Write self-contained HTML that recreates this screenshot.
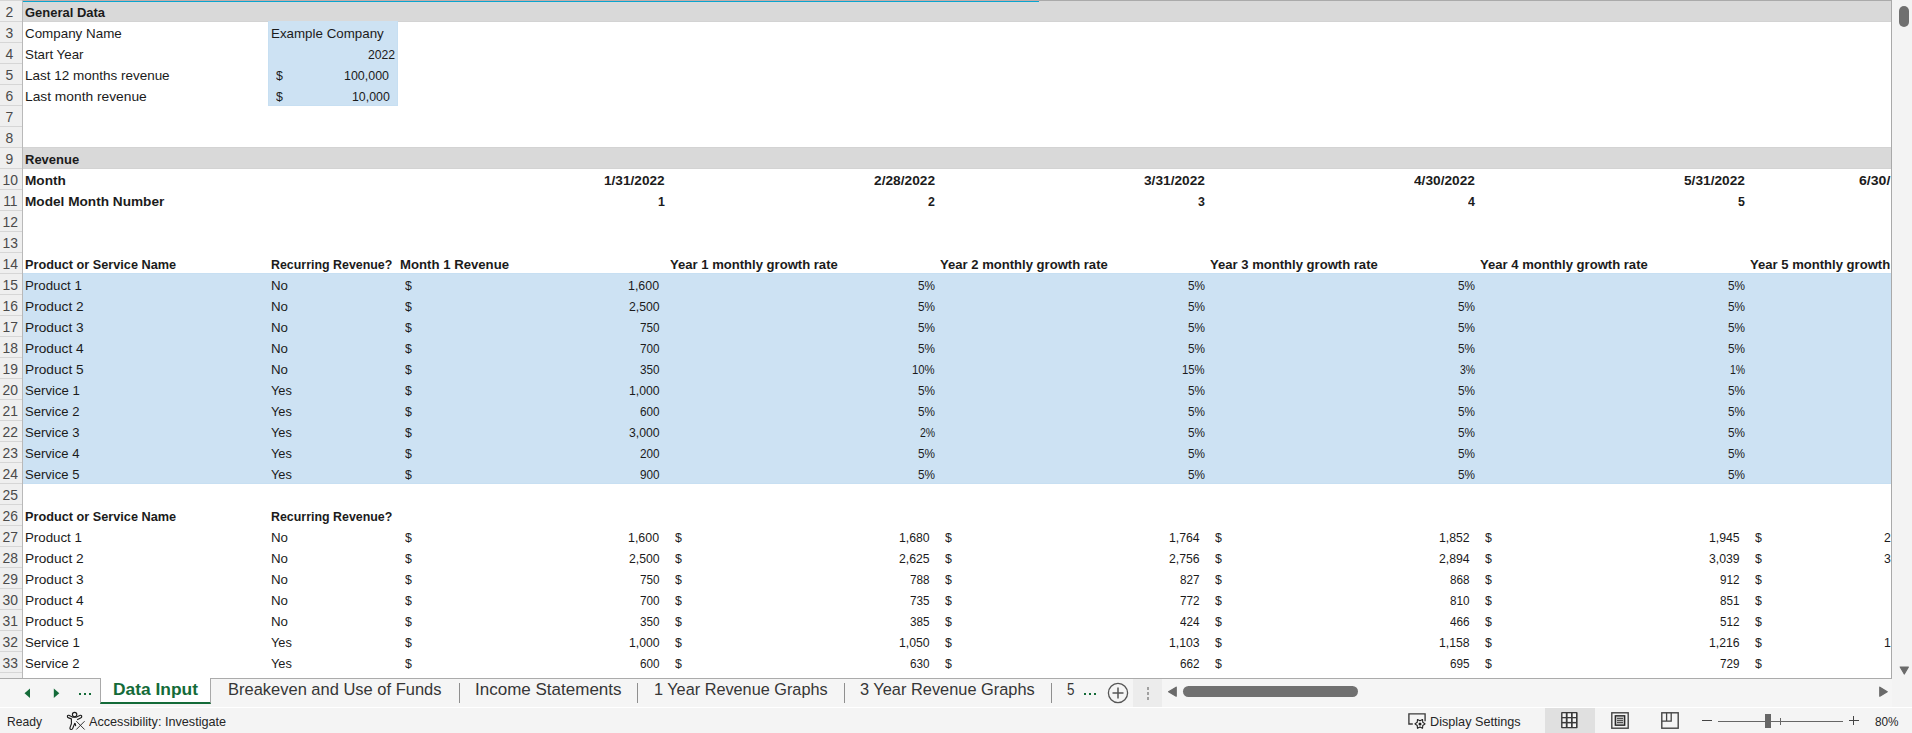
<!DOCTYPE html>
<html><head><meta charset="utf-8"><title>Data Input</title>
<style>
*{margin:0;padding:0;box-sizing:border-box}
html,body{width:1912px;height:733px;overflow:hidden;background:#fff;font-family:"Liberation Sans",sans-serif}
#sheet{position:absolute;left:0;top:0;width:1891px;height:678px;overflow:hidden;background:#fff}
.f{position:absolute}
.t{position:absolute;white-space:nowrap;line-height:20px;color:#1b1b1b;transform-origin:0 0}
#rh{position:absolute;left:0;top:0;width:23px;height:678px;background:#efefef;border-right:1px solid #b9b9b9}
.rl{position:absolute;left:0;width:22px;height:1px;background:#d6d6d6}
.rn{position:absolute;line-height:20px;color:#4a4a4a;white-space:nowrap}
#vline{position:absolute;left:1891px;top:0;width:1px;height:679px;background:#a9a9a9}
#vs{position:absolute;left:1892px;top:0;width:20px;height:707px;background:#f3f3f3}
#tabbar{position:absolute;left:0;top:678px;width:1892px;height:29px;background:#f5f5f5;border-top:1px solid #ababab}
#status{position:absolute;left:0;top:707px;width:1912px;height:26px;background:#f4f4f4;border-top:1px solid #ffffff}
.ui{position:absolute;white-space:nowrap;color:#262626}
</style></head>
<body>
<div id="sheet">
<div class="f" style="left:23px;top:1px;width:1868px;height:21px;background:#d9d9d9"></div>
<div class="f" style="left:23px;top:21px;width:1868px;height:1px;background:#d3d3d3"></div>
<div class="f" style="left:268px;top:21px;width:130px;height:85px;background:#cde2f3"></div>
<div class="f" style="left:268px;top:105px;width:130px;height:1px;background:#c7dff2"></div>
<div class="f" style="left:268px;top:21px;width:1px;height:85px;background:#c7dff2"></div>
<div class="f" style="left:397px;top:21px;width:1px;height:85px;background:#c7dff2"></div>
<div class="f" style="left:23px;top:147px;width:1868px;height:22px;background:#d9d9d9"></div>
<div class="f" style="left:23px;top:147px;width:1868px;height:1px;background:#d3d3d3"></div>
<div class="f" style="left:23px;top:168px;width:1868px;height:1px;background:#d3d3d3"></div>
<div class="f" style="left:23px;top:273px;width:1868px;height:211px;background:#cde2f3"></div>
<div class="f" style="left:23px;top:273px;width:1868px;height:1px;background:#c7dff2"></div>
<div class="f" style="left:23px;top:483px;width:1868px;height:1px;background:#c7dff2"></div>
<div class="t" style="left:25.40px;top:2.60px;font-size:12.7px;font-weight:bold;transform:scaleX(1.0217)">General Data</div>
<div class="t" style="left:25.40px;top:23.60px;font-size:12.7px;transform:scaleX(1.0556)">Company Name</div>
<div class="t" style="left:271.40px;top:23.60px;font-size:12.7px;transform:scaleX(1.0522)">Example Company</div>
<div class="t" style="left:25.40px;top:44.60px;font-size:12.7px;transform:scaleX(1.0502)">Start Year</div>
<div class="t" style="left:367.70px;top:44.60px;font-size:12.7px;transform:scaleX(0.9611)">2022</div>
<div class="t" style="left:25.40px;top:65.60px;font-size:12.7px;transform:scaleX(1.0624)">Last 12 months revenue</div>
<div class="t" style="left:276.20px;top:65.60px;font-size:12.7px;transform:scaleX(0.9718)">$</div>
<div class="t" style="left:344.40px;top:65.60px;font-size:12.7px;transform:scaleX(0.9804)">100,000</div>
<div class="t" style="left:25.40px;top:86.60px;font-size:12.7px;transform:scaleX(1.0856)">Last month revenue</div>
<div class="t" style="left:276.20px;top:86.60px;font-size:12.7px;transform:scaleX(0.9718)">$</div>
<div class="t" style="left:351.60px;top:86.60px;font-size:12.7px;transform:scaleX(0.9742)">10,000</div>
<div class="t" style="left:25.40px;top:149.60px;font-size:12.7px;font-weight:bold;transform:scaleX(1.0246)">Revenue</div>
<div class="t" style="left:25.40px;top:170.60px;font-size:12.7px;font-weight:bold;transform:scaleX(1.0761)">Month</div>
<div class="t" style="left:25.40px;top:191.60px;font-size:12.7px;font-weight:bold;transform:scaleX(1.0740)">Model Month Number</div>
<div class="t" style="left:604.20px;top:170.60px;font-size:12.7px;font-weight:bold;transform:scaleX(1.0743)">1/31/2022</div>
<div class="t" style="left:657.96px;top:191.60px;font-size:12.7px;font-weight:bold;transform:scaleX(0.9768)">1</div>
<div class="t" style="left:873.80px;top:170.60px;font-size:12.7px;font-weight:bold;transform:scaleX(1.0814)">2/28/2022</div>
<div class="t" style="left:927.96px;top:191.60px;font-size:12.7px;font-weight:bold;transform:scaleX(0.9768)">2</div>
<div class="t" style="left:1143.86px;top:170.60px;font-size:12.7px;font-weight:bold;transform:scaleX(1.0803)">3/31/2022</div>
<div class="t" style="left:1197.96px;top:191.60px;font-size:12.7px;font-weight:bold;transform:scaleX(0.9768)">3</div>
<div class="t" style="left:1413.86px;top:170.60px;font-size:12.7px;font-weight:bold;transform:scaleX(1.0803)">4/30/2022</div>
<div class="t" style="left:1467.96px;top:191.60px;font-size:12.7px;font-weight:bold;transform:scaleX(0.9768)">4</div>
<div class="t" style="left:1683.86px;top:170.60px;font-size:12.7px;font-weight:bold;transform:scaleX(1.0803)">5/31/2022</div>
<div class="t" style="left:1737.96px;top:191.60px;font-size:12.7px;font-weight:bold;transform:scaleX(0.9768)">5</div>
<div class="t" style="left:1858.80px;top:170.60px;font-size:12.7px;font-weight:bold;transform:scaleX(1.1098)">6/30/</div>
<div class="t" style="left:25.40px;top:254.60px;font-size:12.7px;font-weight:bold;transform:scaleX(1.0013)">Product or Service Name</div>
<div class="t" style="left:271.40px;top:254.60px;font-size:12.7px;font-weight:bold;transform:scaleX(0.9775)">Recurring Revenue?</div>
<div class="t" style="left:400.40px;top:254.60px;font-size:12.7px;font-weight:bold;transform:scaleX(1.0381)">Month 1 Revenue</div>
<div class="t" style="left:670.40px;top:254.60px;font-size:12.7px;font-weight:bold;transform:scaleX(1.0301)">Year 1 monthly growth rate</div>
<div class="t" style="left:940.40px;top:254.60px;font-size:12.7px;font-weight:bold;transform:scaleX(1.0301)">Year 2 monthly growth rate</div>
<div class="t" style="left:1210.40px;top:254.60px;font-size:12.7px;font-weight:bold;transform:scaleX(1.0301)">Year 3 monthly growth rate</div>
<div class="t" style="left:1480.40px;top:254.60px;font-size:12.7px;font-weight:bold;transform:scaleX(1.0301)">Year 4 monthly growth rate</div>
<div class="t" style="left:1750.40px;top:254.60px;font-size:12.7px;font-weight:bold;transform:scaleX(1.0301)">Year 5 monthly growth rate</div>
<div class="t" style="left:25.40px;top:275.60px;font-size:12.7px;transform:scaleX(1.0478)">Product 1</div>
<div class="t" style="left:271.40px;top:275.60px;font-size:12.7px;transform:scaleX(1.0494)">No</div>
<div class="t" style="left:405.20px;top:275.60px;font-size:12.7px;transform:scaleX(0.9718)">$</div>
<div class="t" style="left:628.30px;top:275.60px;font-size:12.7px;transform:scaleX(0.9780)">1,600</div>
<div class="t" style="left:917.80px;top:275.60px;font-size:12.7px;transform:scaleX(0.9293)">5%</div>
<div class="t" style="left:1187.80px;top:275.60px;font-size:12.7px;transform:scaleX(0.9293)">5%</div>
<div class="t" style="left:1457.80px;top:275.60px;font-size:12.7px;transform:scaleX(0.9293)">5%</div>
<div class="t" style="left:1727.80px;top:275.60px;font-size:12.7px;transform:scaleX(0.9293)">5%</div>
<div class="t" style="left:25.40px;top:296.60px;font-size:12.7px;transform:scaleX(1.0793)">Product 2</div>
<div class="t" style="left:271.40px;top:296.60px;font-size:12.7px;transform:scaleX(1.0494)">No</div>
<div class="t" style="left:405.20px;top:296.60px;font-size:12.7px;transform:scaleX(0.9718)">$</div>
<div class="t" style="left:628.70px;top:296.60px;font-size:12.7px;transform:scaleX(0.9655)">2,500</div>
<div class="t" style="left:917.80px;top:296.60px;font-size:12.7px;transform:scaleX(0.9293)">5%</div>
<div class="t" style="left:1187.80px;top:296.60px;font-size:12.7px;transform:scaleX(0.9293)">5%</div>
<div class="t" style="left:1457.80px;top:296.60px;font-size:12.7px;transform:scaleX(0.9293)">5%</div>
<div class="t" style="left:1727.80px;top:296.60px;font-size:12.7px;transform:scaleX(0.9293)">5%</div>
<div class="t" style="left:25.40px;top:317.60px;font-size:12.7px;transform:scaleX(1.0793)">Product 3</div>
<div class="t" style="left:271.40px;top:317.60px;font-size:12.7px;transform:scaleX(1.0494)">No</div>
<div class="t" style="left:405.20px;top:317.60px;font-size:12.7px;transform:scaleX(0.9718)">$</div>
<div class="t" style="left:639.79px;top:317.60px;font-size:12.7px;transform:scaleX(0.9248)">750</div>
<div class="t" style="left:917.80px;top:317.60px;font-size:12.7px;transform:scaleX(0.9293)">5%</div>
<div class="t" style="left:1187.80px;top:317.60px;font-size:12.7px;transform:scaleX(0.9293)">5%</div>
<div class="t" style="left:1457.80px;top:317.60px;font-size:12.7px;transform:scaleX(0.9293)">5%</div>
<div class="t" style="left:1727.80px;top:317.60px;font-size:12.7px;transform:scaleX(0.9293)">5%</div>
<div class="t" style="left:25.40px;top:338.60px;font-size:12.7px;transform:scaleX(1.0793)">Product 4</div>
<div class="t" style="left:271.40px;top:338.60px;font-size:12.7px;transform:scaleX(1.0494)">No</div>
<div class="t" style="left:405.20px;top:338.60px;font-size:12.7px;transform:scaleX(0.9718)">$</div>
<div class="t" style="left:639.79px;top:338.60px;font-size:12.7px;transform:scaleX(0.9248)">700</div>
<div class="t" style="left:917.80px;top:338.60px;font-size:12.7px;transform:scaleX(0.9293)">5%</div>
<div class="t" style="left:1187.80px;top:338.60px;font-size:12.7px;transform:scaleX(0.9293)">5%</div>
<div class="t" style="left:1457.80px;top:338.60px;font-size:12.7px;transform:scaleX(0.9293)">5%</div>
<div class="t" style="left:1727.80px;top:338.60px;font-size:12.7px;transform:scaleX(0.9293)">5%</div>
<div class="t" style="left:25.40px;top:359.60px;font-size:12.7px;transform:scaleX(1.0793)">Product 5</div>
<div class="t" style="left:271.40px;top:359.60px;font-size:12.7px;transform:scaleX(1.0494)">No</div>
<div class="t" style="left:405.20px;top:359.60px;font-size:12.7px;transform:scaleX(0.9718)">$</div>
<div class="t" style="left:639.79px;top:359.60px;font-size:12.7px;transform:scaleX(0.9248)">350</div>
<div class="t" style="left:912.21px;top:359.60px;font-size:12.7px;transform:scaleX(0.8931)">10%</div>
<div class="t" style="left:1182.21px;top:359.60px;font-size:12.7px;transform:scaleX(0.8931)">15%</div>
<div class="t" style="left:1459.65px;top:359.60px;font-size:12.7px;transform:scaleX(0.8288)">3%</div>
<div class="t" style="left:1729.65px;top:359.60px;font-size:12.7px;transform:scaleX(0.8288)">1%</div>
<div class="t" style="left:25.40px;top:380.60px;font-size:12.7px;transform:scaleX(1.0378)">Service 1</div>
<div class="t" style="left:271.40px;top:380.60px;font-size:12.7px;transform:scaleX(1.0097)">Yes</div>
<div class="t" style="left:405.20px;top:380.60px;font-size:12.7px;transform:scaleX(0.9718)">$</div>
<div class="t" style="left:628.70px;top:380.60px;font-size:12.7px;transform:scaleX(0.9655)">1,000</div>
<div class="t" style="left:917.80px;top:380.60px;font-size:12.7px;transform:scaleX(0.9293)">5%</div>
<div class="t" style="left:1187.80px;top:380.60px;font-size:12.7px;transform:scaleX(0.9293)">5%</div>
<div class="t" style="left:1457.80px;top:380.60px;font-size:12.7px;transform:scaleX(0.9293)">5%</div>
<div class="t" style="left:1727.80px;top:380.60px;font-size:12.7px;transform:scaleX(0.9293)">5%</div>
<div class="t" style="left:25.40px;top:401.60px;font-size:12.7px;transform:scaleX(1.0284)">Service 2</div>
<div class="t" style="left:271.40px;top:401.60px;font-size:12.7px;transform:scaleX(1.0097)">Yes</div>
<div class="t" style="left:405.20px;top:401.60px;font-size:12.7px;transform:scaleX(0.9718)">$</div>
<div class="t" style="left:639.79px;top:401.60px;font-size:12.7px;transform:scaleX(0.9248)">600</div>
<div class="t" style="left:917.80px;top:401.60px;font-size:12.7px;transform:scaleX(0.9293)">5%</div>
<div class="t" style="left:1187.80px;top:401.60px;font-size:12.7px;transform:scaleX(0.9293)">5%</div>
<div class="t" style="left:1457.80px;top:401.60px;font-size:12.7px;transform:scaleX(0.9293)">5%</div>
<div class="t" style="left:1727.80px;top:401.60px;font-size:12.7px;transform:scaleX(0.9293)">5%</div>
<div class="t" style="left:25.40px;top:422.60px;font-size:12.7px;transform:scaleX(1.0284)">Service 3</div>
<div class="t" style="left:271.40px;top:422.60px;font-size:12.7px;transform:scaleX(1.0097)">Yes</div>
<div class="t" style="left:405.20px;top:422.60px;font-size:12.7px;transform:scaleX(0.9718)">$</div>
<div class="t" style="left:628.70px;top:422.60px;font-size:12.7px;transform:scaleX(0.9655)">3,000</div>
<div class="t" style="left:919.65px;top:422.60px;font-size:12.7px;transform:scaleX(0.8288)">2%</div>
<div class="t" style="left:1187.80px;top:422.60px;font-size:12.7px;transform:scaleX(0.9293)">5%</div>
<div class="t" style="left:1457.80px;top:422.60px;font-size:12.7px;transform:scaleX(0.9293)">5%</div>
<div class="t" style="left:1727.80px;top:422.60px;font-size:12.7px;transform:scaleX(0.9293)">5%</div>
<div class="t" style="left:25.40px;top:443.60px;font-size:12.7px;transform:scaleX(1.0284)">Service 4</div>
<div class="t" style="left:271.40px;top:443.60px;font-size:12.7px;transform:scaleX(1.0097)">Yes</div>
<div class="t" style="left:405.20px;top:443.60px;font-size:12.7px;transform:scaleX(0.9718)">$</div>
<div class="t" style="left:639.79px;top:443.60px;font-size:12.7px;transform:scaleX(0.9248)">200</div>
<div class="t" style="left:917.80px;top:443.60px;font-size:12.7px;transform:scaleX(0.9293)">5%</div>
<div class="t" style="left:1187.80px;top:443.60px;font-size:12.7px;transform:scaleX(0.9293)">5%</div>
<div class="t" style="left:1457.80px;top:443.60px;font-size:12.7px;transform:scaleX(0.9293)">5%</div>
<div class="t" style="left:1727.80px;top:443.60px;font-size:12.7px;transform:scaleX(0.9293)">5%</div>
<div class="t" style="left:25.40px;top:464.60px;font-size:12.7px;transform:scaleX(1.0284)">Service 5</div>
<div class="t" style="left:271.40px;top:464.60px;font-size:12.7px;transform:scaleX(1.0097)">Yes</div>
<div class="t" style="left:405.20px;top:464.60px;font-size:12.7px;transform:scaleX(0.9718)">$</div>
<div class="t" style="left:639.79px;top:464.60px;font-size:12.7px;transform:scaleX(0.9248)">900</div>
<div class="t" style="left:917.80px;top:464.60px;font-size:12.7px;transform:scaleX(0.9293)">5%</div>
<div class="t" style="left:1187.80px;top:464.60px;font-size:12.7px;transform:scaleX(0.9293)">5%</div>
<div class="t" style="left:1457.80px;top:464.60px;font-size:12.7px;transform:scaleX(0.9293)">5%</div>
<div class="t" style="left:1727.80px;top:464.60px;font-size:12.7px;transform:scaleX(0.9293)">5%</div>
<div class="t" style="left:25.40px;top:506.60px;font-size:12.7px;font-weight:bold;transform:scaleX(1.0013)">Product or Service Name</div>
<div class="t" style="left:271.40px;top:506.60px;font-size:12.7px;font-weight:bold;transform:scaleX(0.9775)">Recurring Revenue?</div>
<div class="t" style="left:25.40px;top:527.60px;font-size:12.7px;transform:scaleX(1.0478)">Product 1</div>
<div class="t" style="left:271.40px;top:527.60px;font-size:12.7px;transform:scaleX(1.0494)">No</div>
<div class="t" style="left:405.20px;top:527.60px;font-size:12.7px;transform:scaleX(0.9718)">$</div>
<div class="t" style="left:628.30px;top:527.60px;font-size:12.7px;transform:scaleX(0.9780)">1,600</div>
<div class="t" style="left:675.20px;top:527.60px;font-size:12.7px;transform:scaleX(0.9718)">$</div>
<div class="t" style="left:898.70px;top:527.60px;font-size:12.7px;transform:scaleX(0.9655)">1,680</div>
<div class="t" style="left:945.20px;top:527.60px;font-size:12.7px;transform:scaleX(0.9718)">$</div>
<div class="t" style="left:1168.70px;top:527.60px;font-size:12.7px;transform:scaleX(0.9655)">1,764</div>
<div class="t" style="left:1215.20px;top:527.60px;font-size:12.7px;transform:scaleX(0.9718)">$</div>
<div class="t" style="left:1438.70px;top:527.60px;font-size:12.7px;transform:scaleX(0.9655)">1,852</div>
<div class="t" style="left:1485.20px;top:527.60px;font-size:12.7px;transform:scaleX(0.9718)">$</div>
<div class="t" style="left:1708.70px;top:527.60px;font-size:12.7px;transform:scaleX(0.9655)">1,945</div>
<div class="t" style="left:1755.20px;top:527.60px;font-size:12.7px;transform:scaleX(0.9718)">$</div>
<div class="t" style="left:1883.60px;top:527.60px;font-size:12.7px;transform:scaleX(0.9655)">2,042</div>
<div class="t" style="left:25.40px;top:548.60px;font-size:12.7px;transform:scaleX(1.0793)">Product 2</div>
<div class="t" style="left:271.40px;top:548.60px;font-size:12.7px;transform:scaleX(1.0494)">No</div>
<div class="t" style="left:405.20px;top:548.60px;font-size:12.7px;transform:scaleX(0.9718)">$</div>
<div class="t" style="left:628.70px;top:548.60px;font-size:12.7px;transform:scaleX(0.9655)">2,500</div>
<div class="t" style="left:675.20px;top:548.60px;font-size:12.7px;transform:scaleX(0.9718)">$</div>
<div class="t" style="left:898.70px;top:548.60px;font-size:12.7px;transform:scaleX(0.9655)">2,625</div>
<div class="t" style="left:945.20px;top:548.60px;font-size:12.7px;transform:scaleX(0.9718)">$</div>
<div class="t" style="left:1168.70px;top:548.60px;font-size:12.7px;transform:scaleX(0.9655)">2,756</div>
<div class="t" style="left:1215.20px;top:548.60px;font-size:12.7px;transform:scaleX(0.9718)">$</div>
<div class="t" style="left:1438.70px;top:548.60px;font-size:12.7px;transform:scaleX(0.9655)">2,894</div>
<div class="t" style="left:1485.20px;top:548.60px;font-size:12.7px;transform:scaleX(0.9718)">$</div>
<div class="t" style="left:1708.70px;top:548.60px;font-size:12.7px;transform:scaleX(0.9655)">3,039</div>
<div class="t" style="left:1755.20px;top:548.60px;font-size:12.7px;transform:scaleX(0.9718)">$</div>
<div class="t" style="left:1883.60px;top:548.60px;font-size:12.7px;transform:scaleX(0.9655)">3,191</div>
<div class="t" style="left:25.40px;top:569.60px;font-size:12.7px;transform:scaleX(1.0793)">Product 3</div>
<div class="t" style="left:271.40px;top:569.60px;font-size:12.7px;transform:scaleX(1.0494)">No</div>
<div class="t" style="left:405.20px;top:569.60px;font-size:12.7px;transform:scaleX(0.9718)">$</div>
<div class="t" style="left:639.79px;top:569.60px;font-size:12.7px;transform:scaleX(0.9248)">750</div>
<div class="t" style="left:675.20px;top:569.60px;font-size:12.7px;transform:scaleX(0.9718)">$</div>
<div class="t" style="left:909.79px;top:569.60px;font-size:12.7px;transform:scaleX(0.9248)">788</div>
<div class="t" style="left:945.20px;top:569.60px;font-size:12.7px;transform:scaleX(0.9718)">$</div>
<div class="t" style="left:1179.79px;top:569.60px;font-size:12.7px;transform:scaleX(0.9248)">827</div>
<div class="t" style="left:1215.20px;top:569.60px;font-size:12.7px;transform:scaleX(0.9718)">$</div>
<div class="t" style="left:1449.79px;top:569.60px;font-size:12.7px;transform:scaleX(0.9248)">868</div>
<div class="t" style="left:1485.20px;top:569.60px;font-size:12.7px;transform:scaleX(0.9718)">$</div>
<div class="t" style="left:1719.79px;top:569.60px;font-size:12.7px;transform:scaleX(0.9248)">912</div>
<div class="t" style="left:1755.20px;top:569.60px;font-size:12.7px;transform:scaleX(0.9718)">$</div>
<div class="t" style="left:25.40px;top:590.60px;font-size:12.7px;transform:scaleX(1.0793)">Product 4</div>
<div class="t" style="left:271.40px;top:590.60px;font-size:12.7px;transform:scaleX(1.0494)">No</div>
<div class="t" style="left:405.20px;top:590.60px;font-size:12.7px;transform:scaleX(0.9718)">$</div>
<div class="t" style="left:639.79px;top:590.60px;font-size:12.7px;transform:scaleX(0.9248)">700</div>
<div class="t" style="left:675.20px;top:590.60px;font-size:12.7px;transform:scaleX(0.9718)">$</div>
<div class="t" style="left:909.79px;top:590.60px;font-size:12.7px;transform:scaleX(0.9248)">735</div>
<div class="t" style="left:945.20px;top:590.60px;font-size:12.7px;transform:scaleX(0.9718)">$</div>
<div class="t" style="left:1179.79px;top:590.60px;font-size:12.7px;transform:scaleX(0.9248)">772</div>
<div class="t" style="left:1215.20px;top:590.60px;font-size:12.7px;transform:scaleX(0.9718)">$</div>
<div class="t" style="left:1449.79px;top:590.60px;font-size:12.7px;transform:scaleX(0.9248)">810</div>
<div class="t" style="left:1485.20px;top:590.60px;font-size:12.7px;transform:scaleX(0.9718)">$</div>
<div class="t" style="left:1719.79px;top:590.60px;font-size:12.7px;transform:scaleX(0.9248)">851</div>
<div class="t" style="left:1755.20px;top:590.60px;font-size:12.7px;transform:scaleX(0.9718)">$</div>
<div class="t" style="left:25.40px;top:611.60px;font-size:12.7px;transform:scaleX(1.0793)">Product 5</div>
<div class="t" style="left:271.40px;top:611.60px;font-size:12.7px;transform:scaleX(1.0494)">No</div>
<div class="t" style="left:405.20px;top:611.60px;font-size:12.7px;transform:scaleX(0.9718)">$</div>
<div class="t" style="left:639.79px;top:611.60px;font-size:12.7px;transform:scaleX(0.9248)">350</div>
<div class="t" style="left:675.20px;top:611.60px;font-size:12.7px;transform:scaleX(0.9718)">$</div>
<div class="t" style="left:909.79px;top:611.60px;font-size:12.7px;transform:scaleX(0.9248)">385</div>
<div class="t" style="left:945.20px;top:611.60px;font-size:12.7px;transform:scaleX(0.9718)">$</div>
<div class="t" style="left:1179.79px;top:611.60px;font-size:12.7px;transform:scaleX(0.9248)">424</div>
<div class="t" style="left:1215.20px;top:611.60px;font-size:12.7px;transform:scaleX(0.9718)">$</div>
<div class="t" style="left:1449.79px;top:611.60px;font-size:12.7px;transform:scaleX(0.9248)">466</div>
<div class="t" style="left:1485.20px;top:611.60px;font-size:12.7px;transform:scaleX(0.9718)">$</div>
<div class="t" style="left:1719.79px;top:611.60px;font-size:12.7px;transform:scaleX(0.9248)">512</div>
<div class="t" style="left:1755.20px;top:611.60px;font-size:12.7px;transform:scaleX(0.9718)">$</div>
<div class="t" style="left:25.40px;top:632.60px;font-size:12.7px;transform:scaleX(1.0378)">Service 1</div>
<div class="t" style="left:271.40px;top:632.60px;font-size:12.7px;transform:scaleX(1.0097)">Yes</div>
<div class="t" style="left:405.20px;top:632.60px;font-size:12.7px;transform:scaleX(0.9718)">$</div>
<div class="t" style="left:628.70px;top:632.60px;font-size:12.7px;transform:scaleX(0.9655)">1,000</div>
<div class="t" style="left:675.20px;top:632.60px;font-size:12.7px;transform:scaleX(0.9718)">$</div>
<div class="t" style="left:898.70px;top:632.60px;font-size:12.7px;transform:scaleX(0.9655)">1,050</div>
<div class="t" style="left:945.20px;top:632.60px;font-size:12.7px;transform:scaleX(0.9718)">$</div>
<div class="t" style="left:1168.70px;top:632.60px;font-size:12.7px;transform:scaleX(0.9655)">1,103</div>
<div class="t" style="left:1215.20px;top:632.60px;font-size:12.7px;transform:scaleX(0.9718)">$</div>
<div class="t" style="left:1438.70px;top:632.60px;font-size:12.7px;transform:scaleX(0.9655)">1,158</div>
<div class="t" style="left:1485.20px;top:632.60px;font-size:12.7px;transform:scaleX(0.9718)">$</div>
<div class="t" style="left:1708.70px;top:632.60px;font-size:12.7px;transform:scaleX(0.9655)">1,216</div>
<div class="t" style="left:1755.20px;top:632.60px;font-size:12.7px;transform:scaleX(0.9718)">$</div>
<div class="t" style="left:1883.60px;top:632.60px;font-size:12.7px;transform:scaleX(0.9655)">1,277</div>
<div class="t" style="left:25.40px;top:653.60px;font-size:12.7px;transform:scaleX(1.0284)">Service 2</div>
<div class="t" style="left:271.40px;top:653.60px;font-size:12.7px;transform:scaleX(1.0097)">Yes</div>
<div class="t" style="left:405.20px;top:653.60px;font-size:12.7px;transform:scaleX(0.9718)">$</div>
<div class="t" style="left:639.79px;top:653.60px;font-size:12.7px;transform:scaleX(0.9248)">600</div>
<div class="t" style="left:675.20px;top:653.60px;font-size:12.7px;transform:scaleX(0.9718)">$</div>
<div class="t" style="left:909.79px;top:653.60px;font-size:12.7px;transform:scaleX(0.9248)">630</div>
<div class="t" style="left:945.20px;top:653.60px;font-size:12.7px;transform:scaleX(0.9718)">$</div>
<div class="t" style="left:1179.79px;top:653.60px;font-size:12.7px;transform:scaleX(0.9248)">662</div>
<div class="t" style="left:1215.20px;top:653.60px;font-size:12.7px;transform:scaleX(0.9718)">$</div>
<div class="t" style="left:1449.79px;top:653.60px;font-size:12.7px;transform:scaleX(0.9248)">695</div>
<div class="t" style="left:1485.20px;top:653.60px;font-size:12.7px;transform:scaleX(0.9718)">$</div>
<div class="t" style="left:1719.79px;top:653.60px;font-size:12.7px;transform:scaleX(0.9248)">729</div>
<div class="t" style="left:1755.20px;top:653.60px;font-size:12.7px;transform:scaleX(0.9718)">$</div>
<div style="position:absolute;left:0;top:0;width:1891px;height:1px;background:#aaa"></div>
<div style="position:absolute;left:23px;top:0;width:1016px;height:1px;background:#c2aca9"></div>
<div style="position:absolute;left:23px;top:1px;width:1016px;height:1px;background:#0aa5cf"></div>
<div id="rh">
<div class="rl" style="top:0px"></div>
<div class="rn" style="left:5.55px;top:2.18px;font-size:13.9px">2</div>
<div class="rl" style="top:21px"></div>
<div class="rn" style="left:5.55px;top:23.18px;font-size:13.9px">3</div>
<div class="rl" style="top:42px"></div>
<div class="rn" style="left:5.55px;top:44.18px;font-size:13.9px">4</div>
<div class="rl" style="top:63px"></div>
<div class="rn" style="left:5.55px;top:65.18px;font-size:13.9px">5</div>
<div class="rl" style="top:84px"></div>
<div class="rn" style="left:5.55px;top:86.18px;font-size:13.9px">6</div>
<div class="rl" style="top:105px"></div>
<div class="rn" style="left:5.55px;top:107.18px;font-size:13.9px">7</div>
<div class="rl" style="top:126px"></div>
<div class="rn" style="left:5.55px;top:128.18px;font-size:13.9px">8</div>
<div class="rl" style="top:147px"></div>
<div class="rn" style="left:5.55px;top:149.18px;font-size:13.9px">9</div>
<div class="rl" style="top:168px"></div>
<div class="rn" style="left:2.60px;top:170.18px;font-size:13.9px">10</div>
<div class="rl" style="top:189px"></div>
<div class="rn" style="left:3.15px;top:191.18px;font-size:13.9px">11</div>
<div class="rl" style="top:210px"></div>
<div class="rn" style="left:2.60px;top:212.18px;font-size:13.9px">12</div>
<div class="rl" style="top:231px"></div>
<div class="rn" style="left:2.60px;top:233.18px;font-size:13.9px">13</div>
<div class="rl" style="top:252px"></div>
<div class="rn" style="left:2.60px;top:254.18px;font-size:13.9px">14</div>
<div class="rl" style="top:273px"></div>
<div class="rn" style="left:2.60px;top:275.18px;font-size:13.9px">15</div>
<div class="rl" style="top:294px"></div>
<div class="rn" style="left:2.60px;top:296.18px;font-size:13.9px">16</div>
<div class="rl" style="top:315px"></div>
<div class="rn" style="left:2.60px;top:317.18px;font-size:13.9px">17</div>
<div class="rl" style="top:336px"></div>
<div class="rn" style="left:2.60px;top:338.18px;font-size:13.9px">18</div>
<div class="rl" style="top:357px"></div>
<div class="rn" style="left:2.60px;top:359.18px;font-size:13.9px">19</div>
<div class="rl" style="top:378px"></div>
<div class="rn" style="left:2.60px;top:380.18px;font-size:13.9px">20</div>
<div class="rl" style="top:399px"></div>
<div class="rn" style="left:2.60px;top:401.18px;font-size:13.9px">21</div>
<div class="rl" style="top:420px"></div>
<div class="rn" style="left:2.60px;top:422.18px;font-size:13.9px">22</div>
<div class="rl" style="top:441px"></div>
<div class="rn" style="left:2.60px;top:443.18px;font-size:13.9px">23</div>
<div class="rl" style="top:462px"></div>
<div class="rn" style="left:2.60px;top:464.18px;font-size:13.9px">24</div>
<div class="rl" style="top:483px"></div>
<div class="rn" style="left:2.60px;top:485.18px;font-size:13.9px">25</div>
<div class="rl" style="top:504px"></div>
<div class="rn" style="left:2.60px;top:506.18px;font-size:13.9px">26</div>
<div class="rl" style="top:525px"></div>
<div class="rn" style="left:2.60px;top:527.18px;font-size:13.9px">27</div>
<div class="rl" style="top:546px"></div>
<div class="rn" style="left:2.60px;top:548.18px;font-size:13.9px">28</div>
<div class="rl" style="top:567px"></div>
<div class="rn" style="left:2.60px;top:569.18px;font-size:13.9px">29</div>
<div class="rl" style="top:588px"></div>
<div class="rn" style="left:2.60px;top:590.18px;font-size:13.9px">30</div>
<div class="rl" style="top:609px"></div>
<div class="rn" style="left:2.60px;top:611.18px;font-size:13.9px">31</div>
<div class="rl" style="top:630px"></div>
<div class="rn" style="left:2.60px;top:632.18px;font-size:13.9px">32</div>
<div class="rl" style="top:651px"></div>
<div class="rn" style="left:2.60px;top:653.18px;font-size:13.9px">33</div>
<div class="rl" style="top:672px"></div>
<div class="rn" style="left:2.60px;top:674.18px;font-size:13.9px">34</div>
</div>
</div>
<div id="vline"></div>
<div id="vs"><div style="position:absolute;left:7px;top:6px;width:10px;height:21px;border-radius:5px;background:#707070"></div><svg style="position:absolute;left:7px;top:666px" width="11" height="9"><path d="M1.2 1 H9.4 L5.3 8 Z" fill="#6a6a6a" stroke="#6a6a6a" stroke-width="1.2" stroke-linejoin="round"/></svg></div>
<div id="tabbar">
<svg style="position:absolute;left:24px;top:8.5px" width="8" height="11"><path d="M6 0.5 V10 L0.5 5.25 Z" fill="#146b39"/></svg>
<svg style="position:absolute;left:53px;top:8.5px" width="8" height="11"><path d="M0.8 0.5 V10 L6.3 5.25 Z" fill="#146b39"/></svg>
<div style="position:absolute;left:79px;top:14px;width:2.4px;height:2.4px;background:#146b39"></div>
<div style="position:absolute;left:84px;top:14px;width:2.4px;height:2.4px;background:#146b39"></div>
<div style="position:absolute;left:89px;top:14px;width:2.4px;height:2.4px;background:#146b39"></div>
<div style="position:absolute;left:100px;top:-1px;width:111px;height:26px;background:#fff;border-left:1px solid #a9a9a9;border-right:1px solid #a9a9a9;border-bottom:2px solid #146b39"></div>
<div class="t" style="left:112.90px;top:0.85px;font-size:16.6px;font-weight:bold;color:#146b39;transform:scaleX(1.0468)">Data Input</div>
<div class="t" style="left:227.80px;top:0.05px;font-size:16.3px;color:#363636;transform:scaleX(1.0123)">Breakeven and Use of Funds</div>
<div class="t" style="left:475.20px;top:0.05px;font-size:16.3px;color:#363636;transform:scaleX(1.0449)">Income Statements</div>
<div class="t" style="left:653.80px;top:0.05px;font-size:16.3px;color:#363636;transform:scaleX(0.9989)">1 Year Revenue Graphs</div>
<div class="t" style="left:859.80px;top:0.05px;font-size:16.3px;color:#363636;transform:scaleX(1.0052)">3 Year Revenue Graphs</div>
<div style="position:absolute;left:459px;top:4px;width:1px;height:20px;background:#8f8f8f"></div>
<div style="position:absolute;left:637px;top:4px;width:1px;height:20px;background:#8f8f8f"></div>
<div style="position:absolute;left:844px;top:4px;width:1px;height:20px;background:#8f8f8f"></div>
<div style="position:absolute;left:1051px;top:4px;width:1px;height:20px;background:#8f8f8f"></div>
<div class="t" style="left:1066.80px;top:0.05px;font-size:16.3px;color:#363636;transform:scaleX(0.8242)">5</div>
<div style="position:absolute;left:1083.5px;top:14px;width:2.4px;height:2.4px;background:#146b39"></div>
<div style="position:absolute;left:1088.5px;top:14px;width:2.4px;height:2.4px;background:#146b39"></div>
<div style="position:absolute;left:1093.5px;top:14px;width:2.4px;height:2.4px;background:#146b39"></div>
<svg style="position:absolute;left:1107px;top:3px" width="22" height="22"><circle cx="11" cy="11" r="9.6" fill="none" stroke="#555" stroke-width="1.3"/><path d="M11 5.5 V16.5 M5.5 11 H16.5" stroke="#555" stroke-width="1.5"/></svg>
<div style="position:absolute;left:1133px;top:0;width:29px;height:28px;background:#ececec"></div>
<div style="position:absolute;left:1146.5px;top:8px;width:2px;height:2.5px;background:#a0a0a0"></div>
<div style="position:absolute;left:1146.5px;top:13px;width:2px;height:2.5px;background:#a0a0a0"></div>
<div style="position:absolute;left:1146.5px;top:18px;width:2px;height:2.5px;background:#a0a0a0"></div>
<svg style="position:absolute;left:1167px;top:7px" width="11" height="12"><path d="M9.2 1.2 V10.2 L1.6 5.7 Z" fill="#6a6a6a" stroke="#6a6a6a" stroke-width="1.3" stroke-linejoin="round"/></svg>
<div style="position:absolute;left:1183px;top:7px;width:175px;height:11px;border-radius:5.5px;background:#707070"></div>
<svg style="position:absolute;left:1878px;top:7px" width="11" height="12"><path d="M1.8 1.2 V10.2 L9.2 5.7 Z" fill="#6a6a6a" stroke="#6a6a6a" stroke-width="1.3" stroke-linejoin="round"/></svg>
</div>
<div id="status">
<div class="t" style="left:6.80px;top:3.57px;font-size:12.2px;color:#262626;transform:scaleX(0.9915)">Ready</div>
<svg style="position:absolute;left:64px;top:1px" width="24" height="24" viewBox="0 0 24 24"><circle cx="10.6" cy="5.6" r="2.2" fill="none" stroke="#1e1e1e" stroke-width="1.15"/><path d="M13.6 10.6 L16.6 9.0 C18.3 8.2 18.0 6.0 16.3 6.3 L12.6 8.1 L8.4 8.1 L4.8 6.3 C3.0 6.0 2.9 8.4 4.6 8.9 L7.4 9.9 L7.4 14.8 L6.0 18.6 C5.4 20.6 8.2 21.4 8.8 19.2 L10.6 14.6 C10.8 14.2 11.2 14.4 11.3 14.9 L11.6 16.6" fill="none" stroke="#1e1e1e" stroke-width="1.15" stroke-linejoin="round" stroke-linecap="round"/><path d="M12.3 12.2 L20.6 20.5 M20.6 12.2 L12.3 20.5" fill="none" stroke="#2a2a2a" stroke-width="0.95"/></svg>
<div class="t" style="left:89.30px;top:3.57px;font-size:12.2px;color:#262626;transform:scaleX(1.0378)">Accessibility: Investigate</div>
<svg style="position:absolute;left:1404px;top:1px" width="24" height="24" viewBox="0 0 24 24"><path d="M8.8 15 H4.9 V4.9 H21.1 V12.3" fill="none" stroke="#3a3a3a" stroke-width="1.35"/><path d="M21.10 14.90 L18.77 16.50 L18.55 19.32 L16.00 18.10 L13.45 19.32 L13.23 16.50 L10.90 14.90 L13.23 13.30 L13.45 10.48 L16.00 11.70 L18.55 10.48 L18.77 13.30 Z" fill="none" stroke="#1e1e1e" stroke-width="1.1" stroke-linejoin="round"/><circle cx="16" cy="14.9" r="1.5" fill="#1e1e1e"/></svg>
<div class="t" style="left:1429.50px;top:3.57px;font-size:12.2px;color:#262626;transform:scaleX(1.0377)">Display Settings</div>
<div style="position:absolute;left:1545px;top:0;width:50px;height:26px;background:#e0e0e0"></div>
<svg style="position:absolute;left:1560px;top:3px" width="19" height="19" viewBox="0 0 19 19"><rect x="1.1" y="1.1" width="16.5" height="16.2" rx="0.8" fill="#3a3a3a"/><rect x="2.5" y="2.3" width="3.3" height="3.7" fill="#f4f4f4"/><rect x="2.5" y="7.3" width="3.3" height="3.6" fill="#f4f4f4"/><rect x="2.5" y="12.4" width="3.3" height="3.6" fill="#f4f4f4"/><rect x="7.6" y="2.3" width="3.4" height="3.7" fill="#f4f4f4"/><rect x="7.6" y="7.3" width="3.4" height="3.6" fill="#f4f4f4"/><rect x="7.6" y="12.4" width="3.4" height="3.6" fill="#f4f4f4"/><rect x="12.7" y="2.3" width="3.3" height="3.7" fill="#f4f4f4"/><rect x="12.7" y="7.3" width="3.3" height="3.6" fill="#f4f4f4"/><rect x="12.7" y="12.4" width="3.3" height="3.6" fill="#f4f4f4"/></svg>
<svg style="position:absolute;left:1611px;top:3.6px" width="18" height="17" viewBox="0 0 18 17"><rect x="0.8" y="0.8" width="16.4" height="15.4" fill="none" stroke="#444" stroke-width="1.4"/><rect x="4.3" y="3.8" width="9.4" height="9.4" fill="#bbb" stroke="#222" stroke-width="1.3"/><path d="M6 6.5 H12 M6 8.5 H12 M6 10.5 H12" stroke="#444" stroke-width="0.9"/></svg>
<svg style="position:absolute;left:1661px;top:3.6px" width="18" height="17" viewBox="0 0 18 17"><rect x="0.8" y="0.8" width="16.4" height="15.4" fill="none" stroke="#444" stroke-width="1.4"/><path d="M0.8 9.2 H10.2 V0.8 M5.6 0.8 V9.2" fill="none" stroke="#444" stroke-width="1.3"/></svg>
<div style="position:absolute;left:1702px;top:12px;width:9.5px;height:1.2px;background:#444"></div>
<div style="position:absolute;left:1718px;top:13px;width:125px;height:1px;background:#666"></div>
<div style="position:absolute;left:1780px;top:10.3px;width:1px;height:6.5px;background:#666"></div>
<div style="position:absolute;left:1765px;top:6px;width:6px;height:14px;background:#666"></div>
<div style="position:absolute;left:1849px;top:12.2px;width:9.5px;height:1.2px;background:#444"></div>
<div style="position:absolute;left:1853.2px;top:8.2px;width:1.2px;height:9px;background:#444"></div>
<div class="t" style="left:1875.40px;top:3.57px;font-size:12.2px;color:#262626;transform:scaleX(0.9672)">80%</div>
</div>
</body></html>
